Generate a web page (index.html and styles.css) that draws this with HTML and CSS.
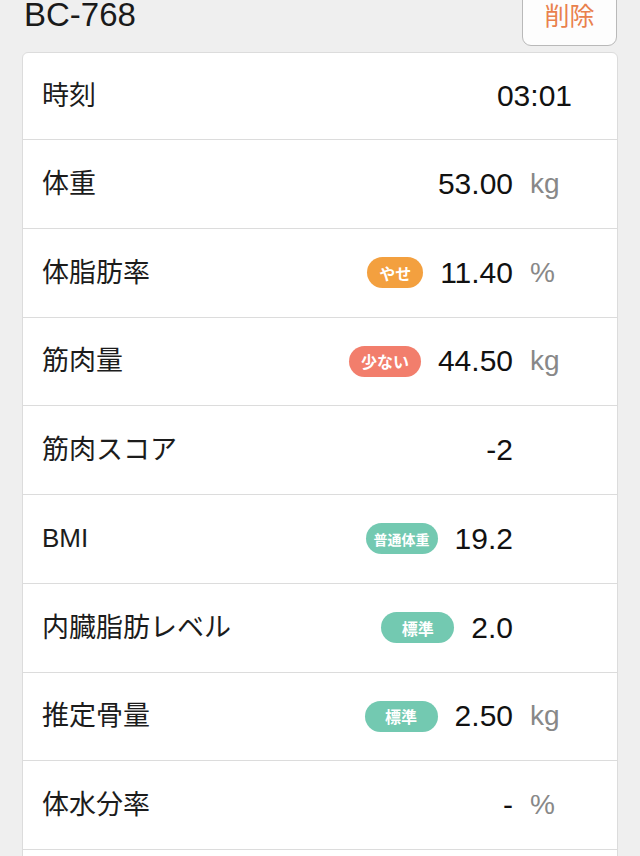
FILE: index.html
```html
<!DOCTYPE html>
<html lang="ja">
<head>
<meta charset="utf-8">
<link rel="stylesheet" href="styles.css">
</head>
<body>
<header class="header">
  <h1 class="title">BC-768</h1>
  <button class="delete">削除</button>
</header>
<div class="card">
  <div class="row first">
    <span class="label">時刻</span>
    <span class="value">03:01</span>
  </div>
  <div class="row">
    <span class="label">体重</span>
    <span class="value">53.00</span><span class="unit">kg</span>
  </div>
  <div class="row">
    <span class="label">体脂肪率</span>
    <span class="badge orange">やせ</span>
    <span class="value">11.40</span><span class="unit">%</span>
  </div>
  <div class="row">
    <span class="label">筋肉量</span>
    <span class="badge red">少ない</span>
    <span class="value">44.50</span><span class="unit">kg</span>
  </div>
  <div class="row">
    <span class="label">筋肉スコア</span>
    <span class="value">-2</span><span class="unit"></span>
  </div>
  <div class="row">
    <span class="label latin">BMI</span>
    <span class="badge green small">普通体重</span>
    <span class="value">19.2</span><span class="unit"></span>
  </div>
  <div class="row">
    <span class="label">内臓脂肪レベル</span>
    <span class="badge green wide">標準</span>
    <span class="value">2.0</span><span class="unit"></span>
  </div>
  <div class="row">
    <span class="label">推定骨量</span>
    <span class="badge green wide">標準</span>
    <span class="value">2.50</span><span class="unit">kg</span>
  </div>
  <div class="row">
    <span class="label">体水分率</span>
    <span class="value">-</span><span class="unit">%</span>
  </div>
  <div class="row">
    <span class="label">基礎代謝量</span>
    <span class="value">1180</span><span class="unit">kcal</span>
  </div>
</div>
</body>
</html>
```

FILE: styles.css
```css
html, body {
  margin: 0;
  padding: 0;
  background: #efefef;
  font-family: "Liberation Sans", "Noto Sans CJK JP", sans-serif;
  color: #111;
  overflow: hidden;
}

.header {
  display: flex;
  justify-content: space-between;
  align-items: flex-start;
  height: 52px;
  padding: 0 23px 0 24px;
}

.title {
  margin: -2px 0 0;
  font-size: 33px;
  line-height: 33px;
  font-weight: normal;
  color: #1a1a1a;
}

.delete {
  margin-top: -12px;
  width: 95px;
  height: 58px;
  padding: 10px 0 0;
  box-sizing: border-box;
  display: flex;
  justify-content: center;
  align-items: flex-start;
  background: #fdfdfd;
  border: 1px solid #b9b9b9;
  border-radius: 9px;
  font-family: "Noto Sans CJK JP", sans-serif;
  font-size: 25px;
  line-height: 30px;
  color: #e9814d;
}

.card {
  margin: 0 22px 0 22px;
  background: #fff;
  border: 1px solid #dcdcdc;
  border-radius: 6px;
}

.row {
  display: flex;
  align-items: center;
  height: 88.75px;
  box-sizing: border-box;
  padding: 0 45px 0 19px;
  border-bottom: 1px solid #dcdcdc;
}

.row.first {
  height: 87px;
}

.label {
  flex: 1;
  margin-bottom: 5px;
  font-family: "Noto Sans CJK JP", sans-serif;
  font-size: 27px;
  color: #1c1c1c;
}

.label.latin {
  margin-bottom: 0;
  font-family: "Liberation Sans", sans-serif;
  font-size: 26px;
}

.value {
  font-size: 30px;
  color: #111;
}

.unit {
  width: 42px;
  padding-left: 17px;
  font-size: 28px;
  color: #888;
}

.badge {
  height: 31px;
  padding: 0 12px;
  margin-right: 17px;
  display: flex;
  align-items: center;
  justify-content: center;
  box-sizing: border-box;
  border-radius: 16px;
  font-family: "Noto Sans CJK JP", sans-serif;
  font-weight: bold;
  font-size: 16px;
  color: #fff;
}

.badge.orange { background: #f3a03f; }
.badge.red { background: #f27e6c; }
.badge.green { background: #73c9b1; }
.badge.small { font-size: 14px; padding: 0 8px; }
.badge.wide { min-width: 73px; }
```
